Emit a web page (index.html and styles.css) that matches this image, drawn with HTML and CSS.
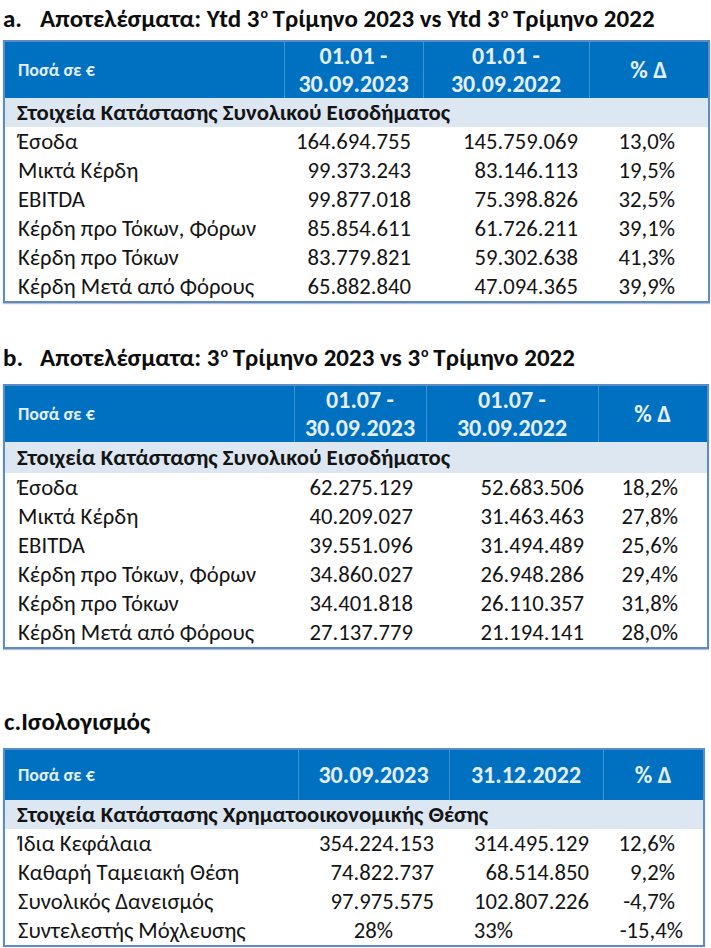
FILE: index.html
```html
<!DOCTYPE html>
<html lang="el">
<head>
<meta charset="utf-8">
<title>Αποτελέσματα</title>
<link rel="stylesheet" href="styles.css">
</head>
<body>
<h2 class="title title-a"><span class="tnum">a.</span>Αποτελέσματα: Ytd 3<sup class="deg">ο</sup> Τρίμηνο 2023 vs Ytd 3<sup class="deg">ο</sup> Τρίμηνο 2022</h2>
<table class="fin t1">
  <colgroup><col class="c1"><col class="c2"><col class="c3"><col class="c4"></colgroup>
  <thead>
    <tr class="head"><th class="lbl">Ποσά σε €</th><th>01.01 -<br>30.09.2023</th><th>01.01 -<br>30.09.2022</th><th>% Δ</th></tr>
  </thead>
  <tbody>
    <tr class="sect"><td colspan="4">Στοιχεία Κατάστασης Συνολικού Εισοδήματος</td></tr>
    <tr><td>Έσοδα</td><td class="n2">164.694.755</td><td class="n3">145.759.069</td><td class="n4">13,0%</td></tr>
    <tr><td>Μικτά Κέρδη</td><td class="n2">99.373.243</td><td class="n3">83.146.113</td><td class="n4">19,5%</td></tr>
    <tr><td>EBITDA</td><td class="n2">99.877.018</td><td class="n3">75.398.826</td><td class="n4">32,5%</td></tr>
    <tr><td>Κέρδη προ Τόκων, Φόρων</td><td class="n2">85.854.611</td><td class="n3">61.726.211</td><td class="n4">39,1%</td></tr>
    <tr><td>Κέρδη προ Τόκων</td><td class="n2">83.779.821</td><td class="n3">59.302.638</td><td class="n4">41,3%</td></tr>
    <tr><td>Κέρδη Μετά από Φόρους</td><td class="n2">65.882.840</td><td class="n3">47.094.365</td><td class="n4">39,9%</td></tr>
  </tbody>
</table>

<h2 class="title title-b"><span class="tnum">b.</span>Αποτελέσματα: 3<sup class="deg">ο</sup> Τρίμηνο 2023 vs 3<sup class="deg">ο</sup> Τρίμηνο 2022</h2>
<table class="fin t2">
  <colgroup><col class="c1"><col class="c2"><col class="c3"><col class="c4"></colgroup>
  <thead>
    <tr class="head"><th class="lbl">Ποσά σε €</th><th>01.07 -<br>30.09.2023</th><th>01.07 -<br>30.09.2022</th><th>% Δ</th></tr>
  </thead>
  <tbody>
    <tr class="sect"><td colspan="4">Στοιχεία Κατάστασης Συνολικού Εισοδήματος</td></tr>
    <tr><td>Έσοδα</td><td class="n2">62.275.129</td><td class="n3">52.683.506</td><td class="n4">18,2%</td></tr>
    <tr><td>Μικτά Κέρδη</td><td class="n2">40.209.027</td><td class="n3">31.463.463</td><td class="n4">27,8%</td></tr>
    <tr><td>EBITDA</td><td class="n2">39.551.096</td><td class="n3">31.494.489</td><td class="n4">25,6%</td></tr>
    <tr><td>Κέρδη προ Τόκων, Φόρων</td><td class="n2">34.860.027</td><td class="n3">26.948.286</td><td class="n4">29,4%</td></tr>
    <tr><td>Κέρδη προ Τόκων</td><td class="n2">34.401.818</td><td class="n3">26.110.357</td><td class="n4">31,8%</td></tr>
    <tr><td>Κέρδη Μετά από Φόρους</td><td class="n2">27.137.779</td><td class="n3">21.194.141</td><td class="n4">28,0%</td></tr>
  </tbody>
</table>

<h2 class="title title-c">c.Ισολογισμός</h2>
<table class="fin t3">
  <colgroup><col class="c1"><col class="c2"><col class="c3"><col class="c4"></colgroup>
  <thead>
    <tr class="head"><th class="lbl">Ποσά σε €</th><th>30.09.2023</th><th>31.12.2022</th><th>% Δ</th></tr>
  </thead>
  <tbody>
    <tr class="sect"><td colspan="4">Στοιχεία Κατάστασης Χρηματοοικονομικής Θέσης</td></tr>
    <tr><td>Ίδια Κεφάλαια</td><td class="n2">354.224.153</td><td class="n3">314.495.129</td><td class="n4">12,6%</td></tr>
    <tr><td>Καθαρή Ταμειακή Θέση</td><td class="n2">74.822.737</td><td class="n3">68.514.850</td><td class="n4">9,2%</td></tr>
    <tr><td>Συνολικός Δανεισμός</td><td class="n2">97.975.575</td><td class="n3">102.807.226</td><td class="n4">-4,7%</td></tr>
    <tr><td>Συντελεστής Μόχλευσης</td><td class="n2 ratio2">28%</td><td class="n3 ratio3">33%</td><td class="n4 wide">-15,4%</td></tr>
  </tbody>
</table>
</body>
</html>
```
FILE: styles.css
```css
html, body {
  margin: 0;
  padding: 0;
  background: #ffffff;
}
body {
  padding-left: 3px;
  font-family: Carlito, Calibri, "Open Sans", "Noto Sans", sans-serif;
  color: #111111;
}
.title {
  margin: 0;
  font-size: 25px;
  font-weight: bold;
  line-height: 30px;
  height: 30px;
  white-space: nowrap;
  color: #0d0d0d;
}
.tnum {
  display: inline-block;
  width: 37px;
}
.deg {
  font-size: 14px;
  vertical-align: 9px;
  line-height: 0;
  margin-left: 1px;
  margin-right: -1px;
}
.title-a { margin-top: 4px; margin-bottom: 6px; }
.title-b { margin-top: 40px; margin-bottom: 11px; }
.title-c { margin-top: 58px; margin-bottom: 11px; padding-left: 1px; }

.fin {
  border-collapse: collapse;
  table-layout: fixed;
  border: 2px solid #5b8cc6;
  box-shadow: 0 1px 1px rgba(120, 130, 150, 0.5);
}
.t1 { width: 705px; }
.t2 { width: 704px; }
.t3 { width: 700px; }

.t1 .c1 { width: 280px; }
.t1 .c2 { width: 139px; }
.t1 .c3 { width: 166px; }
.t1 .c4 { width: 120px; }

.t2 .c1 { width: 290px; }
.t2 .c2 { width: 132px; }
.t2 .c3 { width: 172px; }
.t2 .c4 { width: 110px; }

.t3 .c1 { width: 294px; }
.t3 .c2 { width: 151px; }
.t3 .c3 { width: 154px; }
.t3 .c4 { width: 101px; }

.head th {
  background: #0070c0;
  color: #e3eef9;
  font-weight: bold;
  font-size: 24px;
  line-height: 28px;
  height: 56px;
  padding: 0;
  text-align: center;
  vertical-align: middle;
  border-left: 1px solid #3f93d8;
}
.head th.lbl {
  text-align: left;
  font-size: 18px;
  padding-left: 13px;
  border-left: none;
}
.t3 .head th { height: 50px; }

.sect td {
  background: #dde7f2;
  font-weight: bold;
  font-size: 22.8px;
  line-height: 29px;
  height: 29px;
  padding: 0 0 0 12px;
}
.t2 .sect td {
  height: 31px;
  line-height: 31px;
}

tbody td {
  font-size: 22.7px;
  line-height: 29px;
  height: 29px;
  padding: 0 0 0 13px;
  white-space: nowrap;
  color: #141414;
}
.t1 .n2 { text-align: right; padding: 0 12px 0 0; }
.t1 .n3 { text-align: right; padding: 0 11px 0 0; }
.t1 .n4 { text-align: right; padding: 0 33px 0 0; }

.t2 .n2 { text-align: right; padding: 0 13px 0 0; }
.t2 .n3 { text-align: right; padding: 0 14px 0 0; }
.t2 .n4 { text-align: right; padding: 0 29px 0 0; }

.t3 .n2 { text-align: right; padding: 0 15px 0 0; }
.t3 .n3 { text-align: right; padding: 0 14px 0 0; }
.t3 .n4 { text-align: right; padding: 0 28px 0 0; }
.t3 .ratio2 { padding-right: 56px; }
.t3 .ratio3 { padding-right: 90px; }
.t3 .wide { padding-right: 20px; }
```
